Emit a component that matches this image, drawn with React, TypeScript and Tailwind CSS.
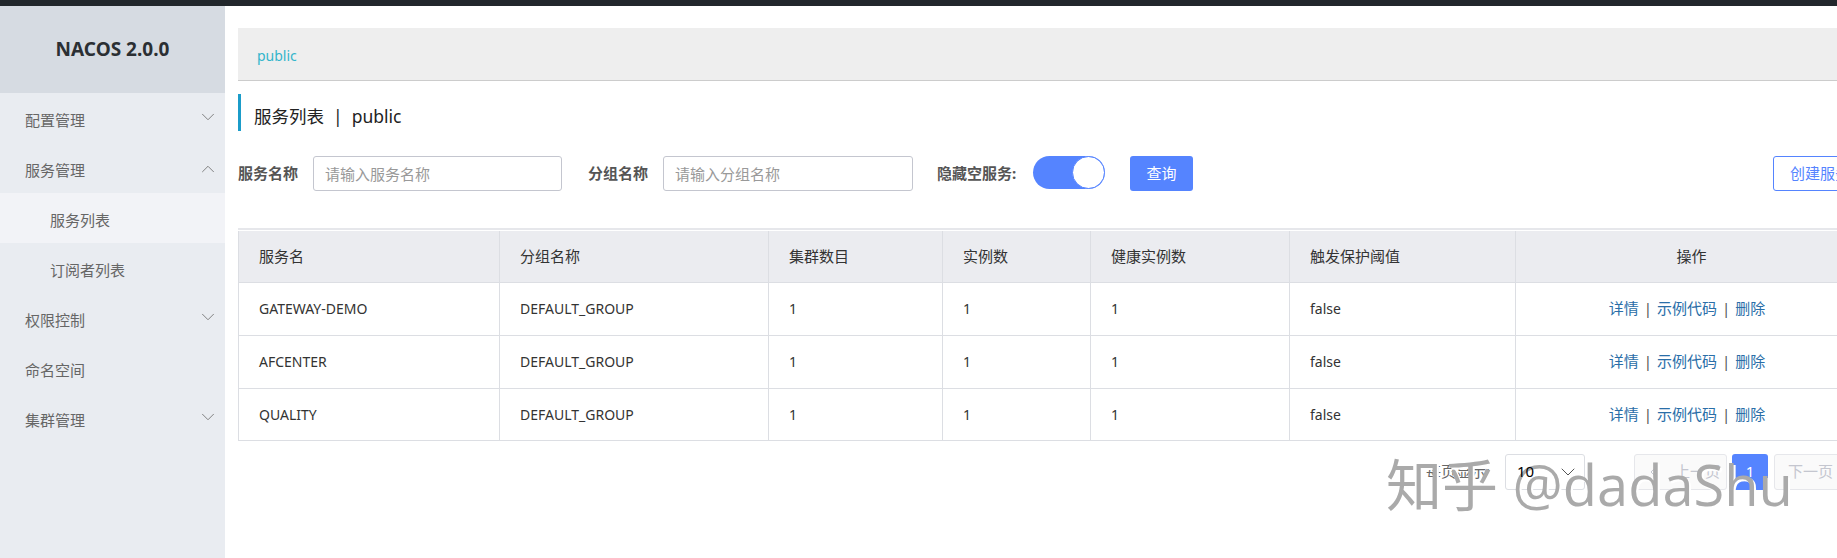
import React from "react";
import { ChevronDown, ChevronLeft, ChevronUp } from "lucide-react";

const menu = [
  { label: "配置管理", icon: "down" },
  { label: "服务管理", icon: "up" },
  { label: "服务列表", sub: true, active: true },
  { label: "订阅者列表", sub: true },
  { label: "权限控制", icon: "down" },
  { label: "命名空间" },
  { label: "集群管理", icon: "down" },
];

const headers = ["服务名", "分组名称", "集群数目", "实例数", "健康实例数", "触发保护阈值"];
const services = ["GATEWAY-DEMO", "AFCENTER", "QUALITY"];
const colWidths = [261, 269, 174, 148, 199, 226, 352];

const Sidebar: React.FC = () => (
  <aside className="w-[225px] shrink-0 bg-[#e9ecf1] text-[15px] text-[#666]">
    <div className="flex h-[87px] items-center justify-center bg-[#d6dbe2] text-[19px] font-bold text-[#2b2f33]">
      NACOS 2.0.0
    </div>
    <ul>
      {menu.map((m) => (
        <li
          key={m.label}
          className={`flex h-[50px] items-center justify-between pr-[6px] ${m.sub ? "pl-[50px]" : "pl-[25px]"} ${m.active ? "bg-[#f2f3f7]" : ""}`}
        >
          <span className="mt-[4px]">{m.label}</span>
          {m.icon === "down" && <ChevronDown size={22} strokeWidth={1} className="-mt-[2px] text-[#777]" />}
          {m.icon === "up" && <ChevronUp size={22} strokeWidth={1} className="mt-[2px] text-[#777]" />}
        </li>
      ))}
    </ul>
  </aside>
);

const Filters: React.FC = () => (
  <div className="mt-[25px] flex h-[35px] items-center text-[15px]">
    <label className="w-[75px] font-bold text-[#555]">服务名称</label>
    <input
      placeholder="请输入服务名称"
      className="h-[35px] w-[249px] rounded-[3px] border border-[#c4c6cf] px-[11px] text-[15px] placeholder:text-[#999]"
    />
    <label className="ml-[26px] w-[75px] font-bold text-[#555]">分组名称</label>
    <input
      placeholder="请输入分组名称"
      className="h-[35px] w-[250px] rounded-[3px] border border-[#c4c6cf] px-[11px] text-[15px] placeholder:text-[#999]"
    />
    <label className="ml-[24px] w-[96px] font-bold text-[#555]">隐藏空服务:</label>
    <div className="-mt-[2px] flex h-[33px] w-[72px] justify-end rounded-full bg-[#5584ff]">
      <div className="h-[33px] w-[33px] rounded-full border border-[#5584ff] bg-white" />
    </div>
    <button className="ml-[25px] h-[35px] w-[63px] rounded-[3px] bg-[#5584ff] text-white">查询</button>
    <button className="ml-auto h-[35px] w-[94px] rounded-[3px] border border-[#5584ff] text-[#5584ff]">
      创建服务
    </button>
  </div>
);

const ServiceTable: React.FC = () => (
  <div className="mt-[37px] border-t-2 border-[#e6e7eb] pt-px">
    <table className="w-full table-fixed text-[14px] text-[#333]">
      <colgroup>
        {colWidths.map((w, i) => (
          <col key={i} style={{ width: w }} />
        ))}
      </colgroup>
      <thead>
        <tr className="h-[51px] bg-[#ebecf0] text-[15px]">
          {headers.map((h) => (
            <th key={h} className="border-x border-b border-[#dcdee3] pl-[20px] text-left font-normal">
              {h}
            </th>
          ))}
          <th className="border-x border-b border-[#dcdee3] text-center font-normal">操作</th>
        </tr>
      </thead>
      <tbody>
        {services.map((s) => (
          <tr key={s} className="h-[53px] last:h-[52px]">
            <td className="border border-[#dcdee3] pl-[20px]">{s}</td>
            <td className="border border-[#dcdee3] pl-[20px]">DEFAULT_GROUP</td>
            <td className="border border-[#dcdee3] pl-[20px]">1</td>
            <td className="border border-[#dcdee3] pl-[20px]">1</td>
            <td className="border border-[#dcdee3] pl-[20px]">1</td>
            <td className="border border-[#dcdee3] pl-[20px]">false</td>
            <td className="border border-[#dcdee3] pr-[9px] text-center text-[15px]">
              <a className="text-[#2a6ea8]">详情</a>
              <span className="mx-[5px] text-[#555]">|</span>
              <a className="text-[#2a6ea8]">示例代码</a>
              <span className="mx-[5px] text-[#555]">|</span>
              <a className="text-[#2a6ea8]">删除</a>
            </td>
          </tr>
        ))}
      </tbody>
    </table>
  </div>
);

const Pagination: React.FC = () => (
  <div className="mt-[13px] flex h-[36px] items-center pl-[1188px] text-[15px] text-[#666]">
    <span className="w-[79px]">每页显示:</span>
    <div className="flex h-[36px] w-[80px] items-center justify-between rounded-[3px] border border-[#dcdee3] pl-[11px] pr-[4px] text-black">
      <span className="relative z-10">10</span>
      <ChevronDown size={24} strokeWidth={1} className="text-[#555]" />
    </div>
    <button className="ml-[49px] flex h-[36px] w-[93px] items-center justify-between rounded-[3px] border border-[#e6e7eb] bg-[#fafafa] pl-[10px] pr-[6px] text-[#c4c6cf]">
      <ChevronLeft size={16} strokeWidth={1.5} />
      上一页
    </button>
    <button className="ml-[5px] h-[36px] w-[36px] rounded-[3px] bg-[#5584ff] text-white">1</button>
    <button className="ml-[6px] h-[36px] w-[93px] rounded-[3px] border border-[#e6e7eb] bg-[#fafafa] pl-[13px] text-left text-[#c4c6cf]">
      下一页
    </button>
  </div>
);

export default function App() {
  return (
    <div className="relative flex h-[558px] w-[1837px] flex-col overflow-hidden bg-white font-['Noto_Sans','Noto_Sans_CJK_SC',sans-serif]">
      <div className="h-[6px] shrink-0 bg-[#22272c]" />
      <div className="flex min-h-0 flex-1">
        <Sidebar />
        <main className="ml-[13px] w-[1629px] shrink-0">
          <div className="mt-[22px] flex h-[53px] items-center border-b border-[#ccc] bg-[#eeeeee] pl-[19px] pt-[2px] text-[14px] text-[#33b5cb]">
            public
          </div>
          <div className="mt-[13px] flex h-[37px] items-center border-l-[3px] border-[#1b9cc9] pl-[13px] pt-[8px] text-[17.5px] text-[#222]">
            服务列表
            <span className="mx-[9px]">|</span>
            public
          </div>
          <Filters />
          <ServiceTable />
          <Pagination />
        </main>
      </div>
      {/* watermark sits over the pager */}
      <div className="absolute left-[1386px] top-[449px] font-['Open_Sans','Noto_Sans_CJK_SC',sans-serif] text-[56px] leading-[70px] font-normal whitespace-nowrap text-[#aaaaaa] [text-shadow:2px_2px_0_#ffffff]">
        知乎 @dadaShu
      </div>
    </div>
  );
}
